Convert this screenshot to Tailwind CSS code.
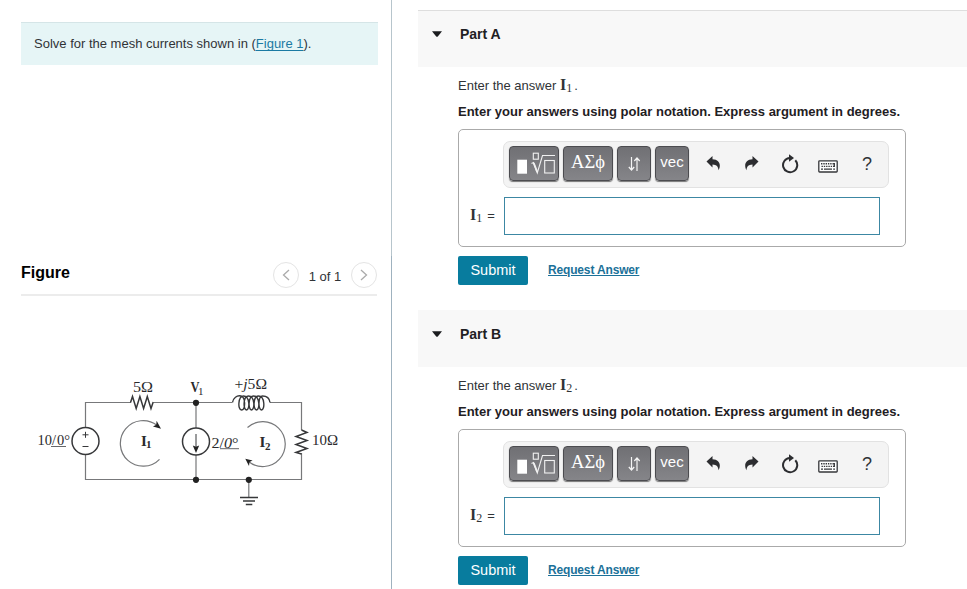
<!DOCTYPE html>
<html lang="en">
<head>
<meta charset="utf-8">
<title>Mesh currents</title>
<script src="https://cdn.jsdelivr.net/npm/@tailwindcss/browser@4"></script>
</head>
<body class="bg-white font-['Liberation_Sans',Arial,sans-serif] text-[13px] text-[#303336] h-[589px] overflow-hidden">
<svg class="hidden">
  <symbol id="tri" viewBox="0 0 12 8"><path d="M1 1.2h10L7 6.2q-1 1-2 0z" fill="#1b1c1f"/></symbol>
  <symbol id="template" viewBox="0 0 50 35">
    <rect x="8.300" y="13.700" width="9.700" height="14" fill="#fff"/>
    <g fill="none" stroke="#f1f1f1" stroke-width="1.100">
      <rect x="24.300" y="7.200" width="5" height="6"/>
      <path d="M22.500 17.500l2-1L28.300 27l5.200-17.500H46"/>
      <path d="M24.700 17l3.500 9" stroke-width="1.900"/>
      <rect x="35.700" y="14.500" width="9.600" height="12.500"/>
    </g>
  </symbol>
  <symbol id="updown" viewBox="0 0 14 16"><path d="M4.500 1v13M1.800 11l2.700 3 2.700-3M10 15V2M7.300 5L10 2l2.700 3" fill="none" stroke="#f4f4f4" stroke-width="1.200"/></symbol>
  <symbol id="undo" viewBox="0 0 15 16"><path d="M.5 6.600L6.500 1v3.200c5 .2 7.300 3 7.300 6.300 0 1.900-.6 3.600-1.300 4.800-.2-3.500-1.700-5.700-6-5.800v3z" fill="#2c2d30"/></symbol>
  <symbol id="reset" viewBox="0 0 18 20"><path d="M14.300 6.200A7.100 7.100 0 1 1 8.800 4" fill="none" stroke="#2c2d30" stroke-width="2"/><path d="M8 .3L13 4 8 7.700z" fill="#2c2d30"/></symbol>
  <symbol id="keyboard" viewBox="0 0 20 13"><rect x=".8" y=".8" width="18.400" height="11.200" rx=".8" fill="#fff" stroke="#36373a" stroke-width="1.300"/><path d="M3 3.800h14M3.500 6.400h13" stroke="#36373a" stroke-width="1.400" stroke-dasharray="1.400 .9"/><path d="M3 9.200h2M6 9.200h8M15.200 9.200H17M16.300 3v4" stroke="#36373a" stroke-width="1.300"/></symbol>
</svg>
<div class="flex h-full">
  <aside class="w-[391px] shrink-0 pt-[22px] pl-[21px]">
    <div class="w-[357px] h-[43px] bg-[#e6f5f6] border-t border-[#d5e5e7] pl-[13px] flex items-center">
      <p class="whitespace-nowrap">Solve for the mesh currents shown in (<a class="text-[#1b7aa3] underline underline-offset-2">Figure 1</a>).</p>
    </div>
    <div class="mt-[190px] w-[356px] h-[41px] flex border-b-2 border-[#ececec]">
      <h2 class="text-[16px] leading-[18px] font-bold text-black mt-[9px] flex-1">Figure</h2>
      <div class="flex items-center h-[26px] mt-[7px]">
        <button class="size-[26px] rounded-full border border-[#e4e4e4] grid place-items-center"><svg class="w-[8px] h-[12px]" viewBox="0 0 8 12"><path d="M7 1L1.500 6 7 11" fill="none" stroke="#aaa" stroke-width="1.300"/></svg></button>
        <span class="w-[52px] text-center text-[13px] pt-[4px]">1 of 1</span>
        <button class="size-[26px] rounded-full border border-[#e4e4e4] grid place-items-center"><svg class="w-[8px] h-[12px]" viewBox="0 0 8 12"><path d="M1 1l5.500 5L1 11" fill="none" stroke="#aaa" stroke-width="1.300"/></svg></button>
      </div>
    </div>
    <svg class="mt-[68px] w-[356px] h-[160px] font-['Liberation_Serif',serif]" viewBox="21 364 356 160" fill="none">
      <g stroke="#77787a" stroke-width="1.200">
        <path d="M85.500 427.500V402.500H131M153.500 402.500H232M270 402.500H301.500V430M301.500 453V479.500H85.500V454.500M196 402.500V428M196 455V479.500M248.800 479.500V497"/>
        <path d="M159.500 459.300A22.800 22.800 0 1 1 157 425.300M247.500 427.500A22.500 22.500 0 1 1 248.500 461.500"/>
      </g>
      <g stroke="#37383a" stroke-width="1.500">
        <circle cx="85.500" cy="441" r="13.500"/>
        <circle cx="196" cy="441.500" r="13.500"/>
        <path d="M130.500 402.500l2-6 3.700 12 3.700-12 3.700 12 3.700-12 3.700 12 2.200-6.500M301.500 430l5.500 2.500-11 4 11 4-11 4 11 4-11 4 5.500 1.500"/>
        <path d="M232.500 402.500C233 398 237 395 241 396C246 397.500 245.500 410 241.500 410C237.500 410 238 396 243.500 396C250 396 250 410 246.500 410C243 410 243 396 248.500 396C255 396 255 410 251.500 410C248 410 248 396 253.500 396C260 396 260 410 256.500 410C253 410 253 396 258.500 396C265 396 265 410 261.500 410C258 410 258 396 262.500 396C267 396 269.500 398.500 270 402.500" stroke-width="1.400"/>
        <path d="M240 497.500h18M243 501h12M245.800 504.500h6.500"/>
        <path d="M82.500 434.800h6M85.500 431.800v6M82.500 446.500h6" stroke-width="1"/><path d="M196 434v15" stroke-width="1"/>
      </g>
      <g fill="#222">
        <circle cx="196" cy="402.800" r="3.100"/><circle cx="196" cy="479.800" r="3.100"/><circle cx="248.800" cy="479.800" r="3.100"/>
        <path d="M192.800 445.500l3.200 1.300 3.200-1.300-3.200 7.500zM161 428.700l-8-2.200 3.300-1.800.3-4zM245.300 458.800l7.300 1.800-3.100 1.500-.5 4z"/>
      </g>
      <path d="M51 446.500H66M220 448.700H239" stroke="#66676a"/>
      <g fill="#2a2a2c" font-size="15">
        <text x="133" y="391.500" textLength="20" lengthAdjust="spacingAndGlyphs">5Ω</text>
        <text x="190.500" y="391.500" font-weight="bold" font-size="14.500" textLength="9" lengthAdjust="spacingAndGlyphs">V</text><text x="198" y="395" font-size="11">1</text>
        <text x="234.500" y="389" textLength="32.500" lengthAdjust="spacingAndGlyphs">+<tspan font-style="italic">j</tspan>5Ω</text>
        <text x="37.500" y="444.500" font-size="14.500" textLength="32.500" lengthAdjust="spacingAndGlyphs">10/<tspan dx="1">0</tspan>°</text>
        <text x="141" y="445.500" font-weight="bold">I</text><text x="146" y="448" font-size="11" font-weight="bold">1</text>
        <text x="211.500" y="447.500" textLength="27" lengthAdjust="spacingAndGlyphs">2/<tspan font-style="italic">0</tspan>°</text>
        <text x="259.500" y="446.500" font-weight="bold">I</text><text x="265" y="449.500" font-size="11" font-weight="bold">2</text>
        <text x="312" y="445" textLength="26" lengthAdjust="spacingAndGlyphs">10Ω</text>
      </g>
    </svg>
  </aside>
  <div class="w-[2px] shrink-0 flex flex-col"><div class="w-px h-[256px] bg-[#b7c5cc]"></div><div class="w-px flex-1 bg-[#9fb2bf]"></div></div>
  <main class="flex-1 min-w-0 pl-[25px] pt-[10px]">
    <section class="h-[300px]">
      <header class="h-[57px] bg-[#f8f8f8] border-t border-[#dedede] flex pt-[14px] pl-[13px]">
        <svg class="w-[12px] h-[8px] mt-[5px]"><use href="#tri"/></svg>
        <h3 class="ml-[17px] font-bold text-[14px] leading-[18px] text-[#1f2023]">Part A</h3>
      </header>
      <div class="ml-[40px] w-[448px]">
        <p class="h-[26px] pt-[9px] leading-[20px] whitespace-nowrap">Enter the answer <span class="font-['Liberation_Serif',serif] text-[16px] leading-none font-bold">I</span><span class="font-['Liberation_Serif',serif] text-[12px] leading-none relative top-[2px]">1</span><span class="ml-[2px]">.</span></p>
        <p class="h-[36px] pt-[9px] leading-[20px] font-bold whitespace-nowrap text-[#1f2023]">Enter your answers using polar notation. Express argument in degrees.</p>
        <div class="h-[118px] border border-[#aaa] rounded-[5px] pt-[11px]">
          <div class="ml-[44px] w-[386px] h-[47px] bg-[#f4f4f4] border border-[#e2e2e2] rounded-[7px] flex gap-[4px] pt-[4px] pl-[5px]">
            <button class="w-[50px] h-[35px] rounded-[4px] border border-[#4c4c50] bg-linear-to-b from-[#707074] to-[#858589] shadow-[0_1px_1px_#777]"><svg class="w-[50px] h-[35px] -m-px"><use href="#template"/></svg></button>
            <button class="w-[50px] h-[35px] rounded-[4px] border border-[#4c4c50] bg-linear-to-b from-[#707074] to-[#858589] shadow-[0_1px_1px_#777] text-white font-['Liberation_Serif',serif] text-[18.500px] leading-[30px] pb-[3px]">ΑΣϕ</button>
            <button class="w-[34px] h-[35px] rounded-[4px] border border-[#4c4c50] bg-linear-to-b from-[#707074] to-[#858589] shadow-[0_1px_1px_#777] grid place-items-center"><svg class="w-[14px] h-[16px]"><use href="#updown"/></svg></button>
            <button class="w-[34px] h-[35px] rounded-[4px] border border-[#4c4c50] bg-linear-to-b from-[#707074] to-[#858589] shadow-[0_1px_1px_#777] text-white text-[15px] leading-[30px] pb-[3px]">vec</button>
            <div class="flex items-start pt-[8px] ml-[13px]">
              <svg class="w-[15px] h-[16px] mt-[1px]"><use href="#undo"/></svg>
              <svg class="w-[15px] h-[16px] mt-[1px] ml-[23px] -scale-x-100"><use href="#undo"/></svg>
              <svg class="w-[18px] h-[20px] ml-[22px]"><use href="#reset"/></svg>
              <svg class="w-[20px] h-[13px] ml-[19px] mt-[6px]"><use href="#keyboard"/></svg>
              <span class="ml-[24px] text-[18px] leading-[20px]">?</span>
            </div>
          </div>
          <div class="flex mt-[9px] pl-[11px]">
            <label class="w-[34px] h-[38px] leading-[36px] whitespace-nowrap"><span class="font-['Liberation_Serif',serif] text-[16px] font-bold">I</span><span class="font-['Liberation_Serif',serif] text-[12px] leading-none relative top-[2px]">1</span><span class="ml-[5px]">=</span></label>
            <div class="w-[376px] h-[38px] border border-[#3c87a3] bg-white"></div>
          </div>
        </div>
        <div class="flex mt-[9px]">
          <button class="w-[70px] h-[29px] rounded-[2px] bg-[#087c9e] text-white text-[14.500px]">Submit</button>
          <a class="ml-[20px] mt-[5px] text-[12px] tracking-[-0.16px] leading-[18px] font-bold underline underline-offset-1 text-[#1b7199]">Request Answer</a>
        </div>
      </div>
    </section>
    <section class="h-[300px]">
      <header class="h-[57px] bg-[#f8f8f8] border-t border-[#f8f8f8] flex pt-[14px] pl-[13px]">
        <svg class="w-[12px] h-[8px] mt-[5px]"><use href="#tri"/></svg>
        <h3 class="ml-[17px] font-bold text-[14px] leading-[18px] text-[#1f2023]">Part B</h3>
      </header>
      <div class="ml-[40px] w-[448px]">
        <p class="h-[26px] pt-[9px] leading-[20px] whitespace-nowrap">Enter the answer <span class="font-['Liberation_Serif',serif] text-[16px] leading-none font-bold">I</span><span class="font-['Liberation_Serif',serif] text-[12px] leading-none relative top-[2px]">2</span><span class="ml-[2px]">.</span></p>
        <p class="h-[36px] pt-[9px] leading-[20px] font-bold whitespace-nowrap text-[#1f2023]">Enter your answers using polar notation. Express argument in degrees.</p>
        <div class="h-[118px] border border-[#aaa] rounded-[5px] pt-[11px]">
          <div class="ml-[44px] w-[386px] h-[47px] bg-[#f4f4f4] border border-[#e2e2e2] rounded-[7px] flex gap-[4px] pt-[4px] pl-[5px]">
            <button class="w-[50px] h-[35px] rounded-[4px] border border-[#4c4c50] bg-linear-to-b from-[#707074] to-[#858589] shadow-[0_1px_1px_#777]"><svg class="w-[50px] h-[35px] -m-px"><use href="#template"/></svg></button>
            <button class="w-[50px] h-[35px] rounded-[4px] border border-[#4c4c50] bg-linear-to-b from-[#707074] to-[#858589] shadow-[0_1px_1px_#777] text-white font-['Liberation_Serif',serif] text-[18.500px] leading-[30px] pb-[3px]">ΑΣϕ</button>
            <button class="w-[34px] h-[35px] rounded-[4px] border border-[#4c4c50] bg-linear-to-b from-[#707074] to-[#858589] shadow-[0_1px_1px_#777] grid place-items-center"><svg class="w-[14px] h-[16px]"><use href="#updown"/></svg></button>
            <button class="w-[34px] h-[35px] rounded-[4px] border border-[#4c4c50] bg-linear-to-b from-[#707074] to-[#858589] shadow-[0_1px_1px_#777] text-white text-[15px] leading-[30px] pb-[3px]">vec</button>
            <div class="flex items-start pt-[8px] ml-[13px]">
              <svg class="w-[15px] h-[16px] mt-[1px]"><use href="#undo"/></svg>
              <svg class="w-[15px] h-[16px] mt-[1px] ml-[23px] -scale-x-100"><use href="#undo"/></svg>
              <svg class="w-[18px] h-[20px] ml-[22px]"><use href="#reset"/></svg>
              <svg class="w-[20px] h-[13px] ml-[19px] mt-[6px]"><use href="#keyboard"/></svg>
              <span class="ml-[24px] text-[18px] leading-[20px]">?</span>
            </div>
          </div>
          <div class="flex mt-[9px] pl-[11px]">
            <label class="w-[34px] h-[38px] leading-[36px] whitespace-nowrap"><span class="font-['Liberation_Serif',serif] text-[16px] font-bold">I</span><span class="font-['Liberation_Serif',serif] text-[12px] leading-none relative top-[2px]">2</span><span class="ml-[5px]">=</span></label>
            <div class="w-[376px] h-[38px] border border-[#3c87a3] bg-white"></div>
          </div>
        </div>
        <div class="flex mt-[9px]">
          <button class="w-[70px] h-[29px] rounded-[2px] bg-[#087c9e] text-white text-[14.500px]">Submit</button>
          <a class="ml-[20px] mt-[5px] text-[12px] tracking-[-0.16px] leading-[18px] font-bold underline underline-offset-1 text-[#1b7199]">Request Answer</a>
        </div>
      </div>
    </section>
  </main>
</div>
</body>
</html>
